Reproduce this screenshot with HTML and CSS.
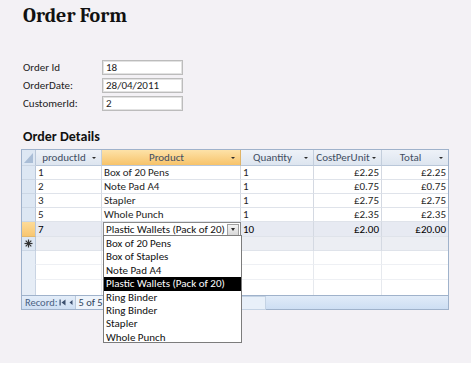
FILE: index.html
```html
<!DOCTYPE html>
<html lang="en">
<head>
	<meta charset="UTF-8">
	<title>Order Form</title>
	<link rel="stylesheet" href="styles.css">
</head>
<body>
	<div class="page">
		<h1 class="title">Order Form</h1>

		<div class="fields">
			<div class="label">Order Id</div>
			<div class="box">18</div>
			<div class="label">OrderDate:</div>
			<div class="box">28/04/2011</div>
			<div class="label">CustomerId:</div>
			<div class="box">2</div>
		</div>

		<h2 class="subtitle">Order Details</h2>

		<div class="datasheet">
			<table class="grid">
				<colgroup>
					<col class="c-sel">
					<col class="c-id">
					<col class="c-prod">
					<col class="c-qty">
					<col class="c-cost">
					<col class="c-total">
				</colgroup>
				<thead>
					<tr>
						<th class="sel corner">
							<svg width="13" height="15" viewBox="0 0 13 15"><polygon points="11,3 11,13 2,13" fill="#a9bdd6"/></svg>
						</th>
						<th><div class="head"><span class="name">productId</span><span class="arrow"></span></div></th>
						<th class="active"><div class="head"><span class="name">Product</span><span class="arrow"></span></div></th>
						<th><div class="head"><span class="name">Quantity</span><span class="arrow"></span></div></th>
						<th><div class="head"><span class="name">CostPerUnit</span><span class="arrow"></span></div></th>
						<th><div class="head"><span class="name">Total</span><span class="arrow"></span></div></th>
					</tr>
				</thead>
				<tbody>
					<tr>
						<td class="sel"></td><td>1</td><td>Box of 20 Pens</td><td>1</td><td class="num">£2.25</td><td class="num">£2.25</td>
					</tr>
					<tr>
						<td class="sel"></td><td>2</td><td>Note Pad A4</td><td>1</td><td class="num">£0.75</td><td class="num">£0.75</td>
					</tr>
					<tr>
						<td class="sel"></td><td>3</td><td>Stapler</td><td>1</td><td class="num">£2.75</td><td class="num">£2.75</td>
					</tr>
					<tr>
						<td class="sel"></td><td>5</td><td>Whole Punch</td><td>1</td><td class="num">£2.35</td><td class="num">£2.35</td>
					</tr>
					<tr class="current">
						<td class="sel"></td>
						<td>7</td>
						<td class="combo-cell">
							<div class="combo">
								<span class="combo-text">Plastic Wallets (Pack of 20)</span>
								<span class="combo-btn"><span class="arrow"></span></span>
							</div>
						</td>
						<td>10</td>
						<td class="num">£2.00</td>
						<td class="num">£20.00</td>
					</tr>
					<tr class="newrow">
						<td class="sel">
							<svg width="9" height="9" viewBox="0 0 9 9"><g stroke="#333" stroke-width="1.2"><line x1="4.5" y1="0.5" x2="4.5" y2="8.5"/><line x1="0.5" y1="4.5" x2="8.5" y2="4.5"/><line x1="1.7" y1="1.7" x2="7.3" y2="7.3"/><line x1="7.3" y1="1.7" x2="1.7" y2="7.3"/></g></svg>
						</td>
						<td></td><td></td><td></td><td></td><td></td>
					</tr>
					<tr class="empty"><td class="sel"></td><td></td><td></td><td></td><td></td><td></td></tr>
					<tr class="empty tall"><td class="sel"></td><td></td><td></td><td></td><td></td><td></td></tr>
					<tr class="empty tall last"><td class="sel"></td><td></td><td></td><td></td><td></td><td></td></tr>
				</tbody>
			</table>

			<div class="nav">
				<span class="nav-label">Record:</span>
				<svg class="nav-btn" width="8" height="9" viewBox="0 0 8 9"><rect x="0.5" y="1.5" width="1.2" height="6" fill="#3b4f6e"/><polygon points="6.5,1.5 6.5,7.5 2.5,4.5" fill="#3b4f6e"/></svg>
				<svg class="nav-btn" width="6" height="9" viewBox="0 0 6 9"><polygon points="4.5,2 4.5,7 1.5,4.5" fill="#3b4f6e"/></svg>
				<span class="nav-pos">5 of 5</span>
				<span class="nav-gap"></span>
				<span class="nav-thumb"></span>
				<span class="nav-track"></span>
			</div>

			<ul class="droplist">
				<li>Box of 20 Pens</li>
				<li>Box of Staples</li>
				<li>Note Pad A4</li>
				<li class="hl">Plastic Wallets (Pack of 20)</li>
				<li>Ring Binder</li>
				<li>Ring Binder</li>
				<li>Stapler</li>
				<li>Whole Punch</li>
			</ul>
		</div>
	</div>
</body>
</html>
```

FILE: styles.css
```css
html, body {
	margin: 0;
	padding: 0;
	background: #fff;
}
body {
	font-family: Carlito, Calibri, Lato, "Liberation Sans", sans-serif;
	font-size: 11px;
	color: #1e1e1e;
}
.page {
	position: relative;
	width: 471px;
	height: 363px;
	box-sizing: border-box;
	padding: 4px 0 0 21px;
	background: #f3f1f5;
	display: flex;
	flex-direction: column;
}
.title {
	margin: 0 0 0 2px;
	font-family: Caladea, Cambria, "Liberation Serif", serif;
	font-size: 20px;
	line-height: 24px;
	font-weight: bold;
	color: #111;
}
.fields {
	margin: 32px 0 0 2px;
	display: grid;
	grid-template-columns: 79px 81px;
	grid-auto-rows: 15px;
	row-gap: 3px;
}
.label {
	line-height: 15px;
	color: #222;
}
.box {
	box-sizing: border-box;
	height: 15px;
	border: 1px solid #bcbcbc;
	box-shadow: inset 0 0 0 1px #e2e2e2;
	background: #fff;
	padding-left: 3px;
	line-height: 13px;
}
.subtitle {
	margin: 18px 0 0 2px;
	font-size: 14px;
	line-height: 16px;
	font-weight: bold;
	color: #111;
}
.datasheet {
	position: relative;
	margin-top: 4px;
	width: 428px;
	box-sizing: border-box;
	border: 1px solid #9fb2cb;
	background: #fff;
}
.grid {
	width: 426px;
	table-layout: fixed;
	border-collapse: separate;
	border-spacing: 0;
}
.c-sel { width: 14px; }
.c-id { width: 66px; }
.c-prod { width: 139px; }
.c-qty { width: 73px; }
.c-cost { width: 68px; }
.c-total { width: 66px; }
.grid th, .grid td {
	box-sizing: border-box;
	padding: 0 2px;
	border-right: 1px solid #d4d9e2;
	border-bottom: 1px solid #dfe3ea;
	white-space: nowrap;
	overflow: hidden;
	line-height: 13px;
	text-align: left;
	vertical-align: middle;
}
.grid th:last-child, .grid td:last-child {
	border-right: none;
}
.grid thead tr {
	height: 15px;
}
.grid th {
	font-weight: normal;
	color: #3f4d62;
	background: linear-gradient(#eef2f8, #dde5ef);
	border-bottom: 1px solid #b9c7d9;
	border-right: 1px solid #c3cedc;
}
.grid th.active {
	background: linear-gradient(#fde2a8, #f7c36a);
	border-right-color: #e0b467;
}
.head {
	display: flex;
	align-items: center;
}
.head .name {
	flex: 1;
	text-align: center;
}
.arrow {
	width: 0;
	height: 0;
	margin: 0 3px 0 2px;
	border-left: 2px solid transparent;
	border-right: 2px solid transparent;
	border-top: 2px solid #2b2b2b;
}
.grid th.corner, .grid td.sel {
	padding: 0;
	background: #dde7f3;
	border-right: 1px solid #b9c7d9;
	border-bottom: 1px solid #ccd7e5;
	text-align: center;
}
.grid th.corner svg {
	display: block;
}
.grid tbody tr {
	height: 14px;
}
.grid tbody tr.tall {
	height: 15px;
}
.grid td.num {
	text-align: right;
}
.grid tr.current td {
	background: #e7eaf2;
	color: #000;
}
.grid tr.current td.sel {
	background: linear-gradient(#fddb99, #f8c670);
	border-bottom-color: #e3b86c;
}
.grid tr.newrow td {
	background: #eceef3;
}
.grid tr.newrow td.sel {
	background: #dde7f3;
}
.grid tr.newrow svg {
	display: block;
	margin: 0 auto;
}
.grid tr.empty td {
	border-bottom-color: #eef0f4;
	border-right-color: #e6e9ee;
}
.grid tr.empty td.sel {
	background: #e6edf6;
	border-right-color: #c9d4e3;
	border-bottom-color: #e6edf6;
}
.grid tr.last td {
	border-bottom: none;
}
.grid td.combo-cell {
	padding: 0 0 0 1px;
	overflow: visible;
}
.combo {
	display: flex;
	align-items: center;
	height: 14px;
	box-sizing: border-box;
	border: 1px solid #8a8a8a;
	border-bottom: none;
	background: #fff;
	padding-left: 2px;
	margin-right: -1px;
}
.combo-text {
	flex: 1;
	color: #111;
}
.combo-btn {
	display: flex;
	align-items: center;
	justify-content: center;
	width: 10px;
	height: 10px;
	margin-right: 1px;
	border: 1px solid #a0a0a0;
	background: linear-gradient(#f4f4f4, #d8d8d8);
}
.combo-btn .arrow {
	margin: 0;
	border-left-width: 2.5px;
	border-right-width: 2.5px;
	border-top-width: 3px;
}
.nav {
	display: flex;
	align-items: center;
	height: 14px;
	box-sizing: border-box;
	border-top: 1px solid #9fb2cb;
	background: linear-gradient(#e3edf9, #cfdff3);
	color: #4a6284;
	font-size: 10.5px;
	line-height: 13px;
	white-space: nowrap;
}
.nav-label {
	margin-left: 3px;
	margin-right: 2px;
}
.nav-btn {
	flex: none;
	margin-right: 1px;
}
.nav-pos {
	flex: none;
	height: 13px;
	padding-left: 2px;
	width: 25px;
	background: #eef4fb;
	border-left: 1px solid #b9c9dc;
	color: #2d3f5a;
}
.nav-gap {
	flex: none;
	width: 137px;
}
.nav-thumb {
	flex: none;
	width: 24px;
	height: 12px;
	border: 1px solid #c4d3e4;
	background: #e8f0f9;
}
.nav-track {
	flex: 1;
	height: 13px;
	background: linear-gradient(#e0ebf8, #cddef3);
}
.droplist {
	position: absolute;
	left: 81px;
	top: 85px;
	width: 139px;
	height: 108px;
	box-sizing: border-box;
	margin: 0;
	padding: 1px 0 0 0;
	list-style: none;
	border: 1px solid #7c7c7c;
	background: #fff;
}
.droplist li {
	height: 13.4px;
	line-height: 13.4px;
	padding-left: 2px;
	color: #111;
	white-space: nowrap;
}
.droplist li.hl {
	background: #000;
	color: #fff;
}
```
